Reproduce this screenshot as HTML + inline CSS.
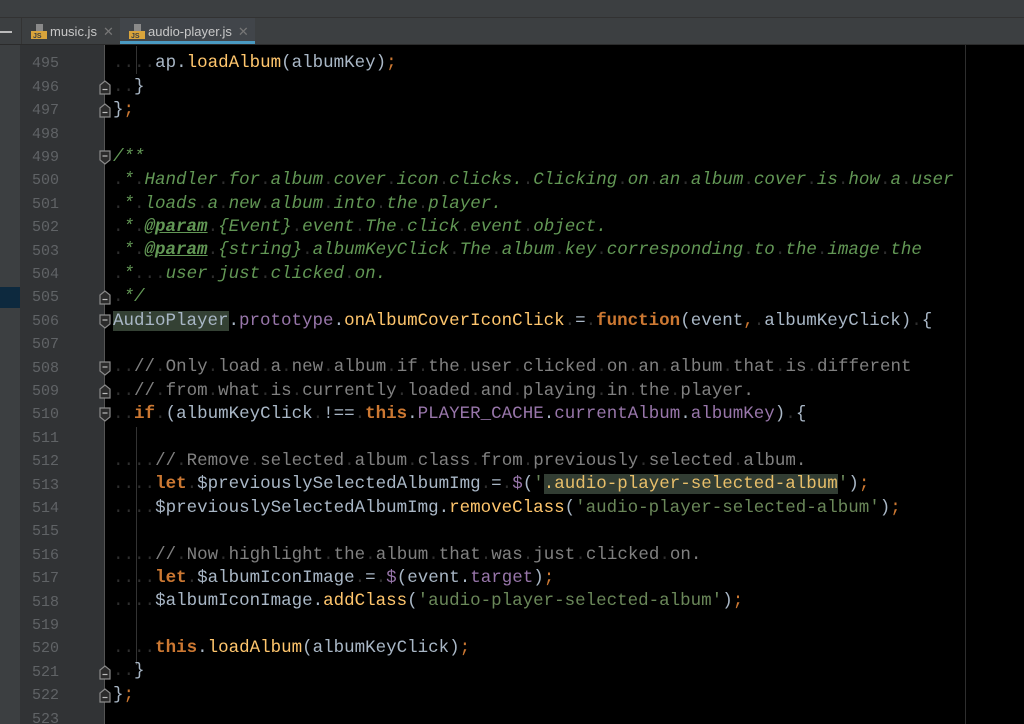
<!DOCTYPE html>
<html><head><meta charset="utf-8">
<style>
*{margin:0;padding:0;box-sizing:border-box}
html,body{width:1024px;height:724px;overflow:hidden}
body{background:#000;position:relative;font-family:"Liberation Mono",monospace}
#top{position:absolute;left:0;top:0;width:1024px;height:18px;background:#3c3f41;border-bottom:1px solid #323232}
#tabs{position:absolute;left:0;top:18px;width:1024px;height:27px;background:#3c3f41;border-bottom:1px solid #2b2b2b}
.tab{position:absolute;top:0;height:26px;font:13px "Liberation Sans",sans-serif;color:#c8c8c8;line-height:27px}
.tab .ic{position:absolute;left:9px;top:6px;width:16px;height:15px}
.tab .x{color:#777;margin-left:6px}
#left{position:absolute;left:0;top:45px;width:20px;height:679px;background:#3c3f41}
#gut{position:absolute;left:20px;top:45px;width:85px;height:679px;background:#313335;border-right:1px solid #555}
.ln{position:absolute;left:20px;width:39px;text-align:right;color:#606366;font-size:15px;height:23.4px;line-height:23.4px}
#code{position:absolute;left:113px;top:52.3px;font-size:17.5px;line-height:23.4px;color:#a9b7c6}
.l{height:23.4px;white-space:pre}
.k{color:#cc7832;font-weight:bold}
.f{color:#ffc66d}
.c{color:#808080}
.d{color:#629755;font-style:italic}
.t{font-weight:bold;text-decoration:underline}
.p{color:#9876aa}
.s{color:#6a8759}
.o{color:#cc7832}
.ws{color:#2e2e2e}
.fm{position:absolute;left:99px;width:12px;height:15px}
</style></head><body>
<div id="top"></div>
<div id="tabs">
 <div style="position:absolute;left:0;top:13px;width:12px;height:2px;background:#bbb"></div>
 <div style="position:absolute;left:21px;top:0;width:1px;height:26px;background:#333"></div>
 <div class="tab" style="left:22px;width:98px;padding-left:28px">
  <svg class="ic" viewBox="0 0 16 15"><rect x="5" y="0" width="7" height="8" fill="#8a8a8a"/><rect x="0" y="7" width="16" height="8" fill="#d9a43b"/><text x="2" y="14" font-size="7" font-family="Liberation Sans" fill="#3c3f41" font-weight="bold">JS</text></svg>music.js<span class="x">✕</span></div>
 <div class="tab" style="left:120px;width:135px;padding-left:28px;background:#41454a;border-bottom:3px solid #4a9ac2;height:26px">
  <svg class="ic" viewBox="0 0 16 15"><rect x="5" y="0" width="7" height="8" fill="#8a8a8a"/><rect x="0" y="7" width="16" height="8" fill="#d9a43b"/><text x="2" y="14" font-size="7" font-family="Liberation Sans" fill="#3c3f41" font-weight="bold">JS</text></svg>audio-player.js<span class="x">✕</span></div>
</div>
<div id="left"><div style="position:absolute;left:0;top:242px;width:20px;height:21px;background:#0d293e"></div></div>
<div id="gut"></div>
<div style="position:absolute;left:965px;top:45px;width:1px;height:679px;background:#2e2e2e"></div>
<div style="position:absolute;left:136px;top:46px;width:1px;height:28px;background:#333"></div>
<div style="position:absolute;left:136px;top:427px;width:1px;height:238px;background:#333"></div>
<div id="nums"></div>
<div id="code"><div class="l">    ap.<span class="f">loadAlbum</span>(albumKey)<span class="o">;</span></div><div class="l">  }</div><div class="l">}<span class="o">;</span></div><div class="l"></div><div class="l d">/**</div><div class="l d"> * Handler for album cover icon clicks. Clicking on an album cover is how a user</div><div class="l d"> * loads a new album into the player.</div><div class="l d"> * <span class="t">@param</span> {Event} event The click event object.</div><div class="l d"> * <span class="t">@param</span> {string} albumKeyClick The album key corresponding to the image the</div><div class="l d"> *   user just clicked on.</div><div class="l d"> */</div><div class="l"><span style="background:#344134">AudioPlayer</span>.<span class="p">prototype</span>.<span class="f">onAlbumCoverIconClick</span> = <span class="k">function</span>(event<span class="o">,</span> albumKeyClick) {</div><div class="l"></div><div class="l c">  // Only load a new album if the user clicked on an album that is different</div><div class="l c">  // from what is currently loaded and playing in the player.</div><div class="l">  <span class="k">if</span> (albumKeyClick !== <span class="k">this</span>.<span class="p">PLAYER_CACHE</span>.<span class="p">currentAlbum</span>.<span class="p">albumKey</span>) {</div><div class="l"></div><div class="l c">    // Remove selected album class from previously selected album.</div><div class="l">    <span class="k">let</span> $previouslySelectedAlbumImg = <span class="p">$</span>(<span class="s">'</span><span style="background:#323d33;color:#e8bf6a">.audio-player-selected-album</span><span class="s">'</span>)<span class="o">;</span></div><div class="l">    $previouslySelectedAlbumImg.<span class="f">removeClass</span>(<span class="s">'audio-player-selected-album'</span>)<span class="o">;</span></div><div class="l"></div><div class="l c">    // Now highlight the album that was just clicked on.</div><div class="l">    <span class="k">let</span> $albumIconImage = <span class="p">$</span>(event.<span class="p">target</span>)<span class="o">;</span></div><div class="l">    $albumIconImage.<span class="f">addClass</span>(<span class="s">'audio-player-selected-album'</span>)<span class="o">;</span></div><div class="l"></div><div class="l">    <span class="k">this</span>.<span class="f">loadAlbum</span>(albumKeyClick)<span class="o">;</span></div><div class="l">  }</div><div class="l">}<span class="o">;</span></div><div class="l"></div></div>
<script>
(function(){
 var n=document.getElementById('nums'),h='';
 for(var i=0;i<29;i++){h+='<div class="ln" style="top:'+(52.3+i*23.4)+'px">'+(495+i)+'</div>';}
 var ends=[496,497,505,509,521,522],starts=[499,506,508,510];
 function m(line,up){var y=52.3+(line-495)*23.4+4;
  var d=up?'M1 14 L1 5 L6 1 L11 5 L11 14 Z':'M1 1 L11 1 L11 10 L6 14 L1 10 Z';
  return '<svg class="fm" style="top:'+y+'px" viewBox="0 0 12 15"><path d="'+d+'" fill="#2b2b2b" stroke="#8a8a8a" stroke-width="1.2"/><line x1="3.5" y1="'+(up?9.5:6)+'" x2="8.5" y2="'+(up?9.5:6)+'" stroke="#bbb" stroke-width="1.2"/></svg>';}
 ends.forEach(function(l){h+=m(l,true)});starts.forEach(function(l){h+=m(l,false)});
 n.innerHTML=h;
 var w=document.createTreeWalker(document.getElementById('code'),NodeFilter.SHOW_TEXT),a=[],t;
 while(t=w.nextNode())a.push(t);
 a.forEach(function(t){if(t.nodeValue.indexOf(' ')<0)return;
  var s=document.createElement('span');
  s.innerHTML=t.nodeValue.replace(/&/g,'&amp;').replace(/</g,'&lt;').replace(/ /g,'<span class="ws" style="font-style:normal;font-weight:normal;text-decoration:none">.</span>');
  t.parentNode.replaceChild(s,t);});
})();
</script>
</body></html>
